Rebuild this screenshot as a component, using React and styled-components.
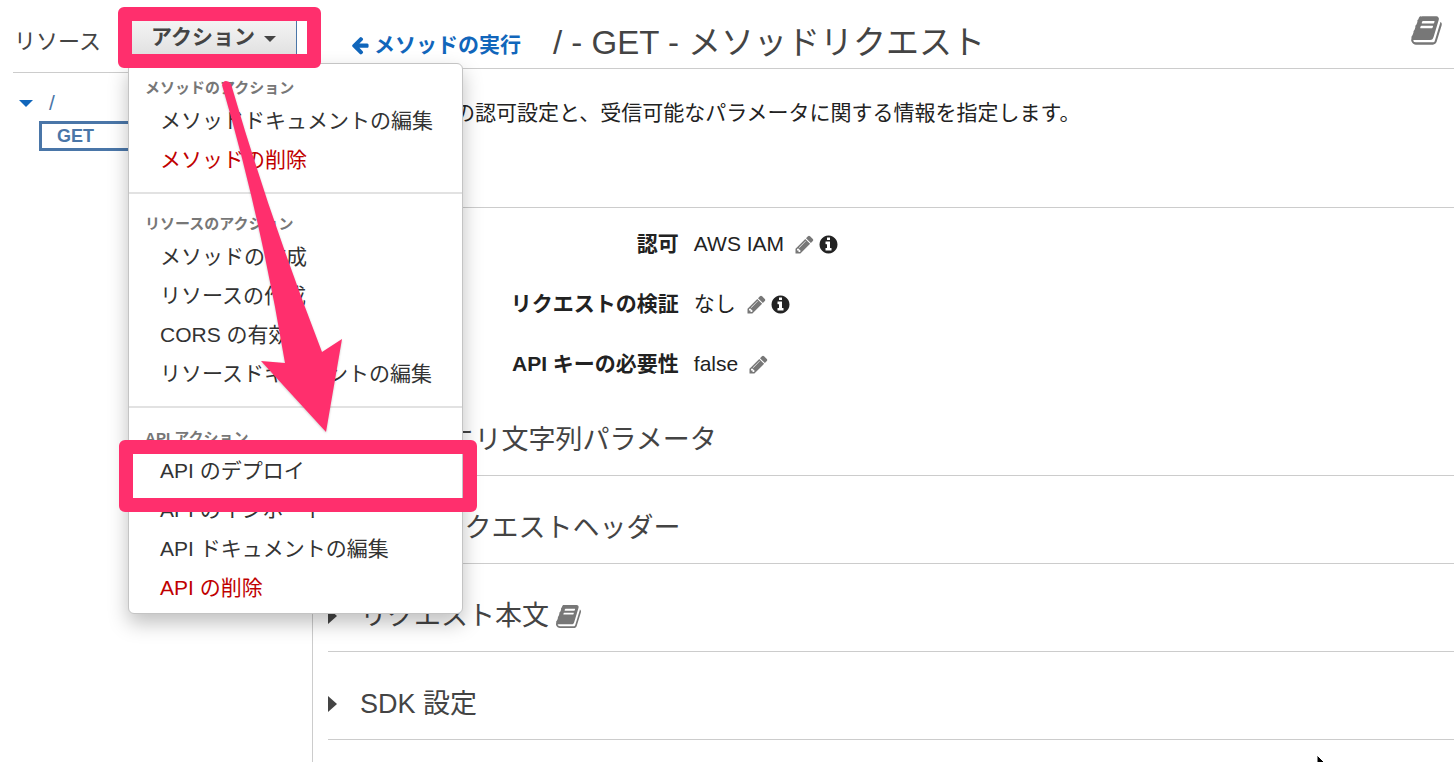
import React from "react";
import styled, { createGlobalStyle } from "styled-components";

const ICONS = {
  pencil:
    "M491 1536l91-91-235-235-91 91v107h128v128h107zm523-928q0-22-22-22-10 0-17 7l-542 542q-7 7-7 17 0 22 22 22 10 0 17-7l542-542q7-7 7-17zm-54-192l416 416-832 832h-416v-416zm683 96q0 53-37 90l-166 166-416-416 166-165q36-38 90-38 53 0 91 38l235 234q37 39 37 91z",
  book: "M1703 478q40 57 18 129l-275 906q-19 64-76.5 107.5t-122.5 43.5h-923q-77 0-148.5-53.5t-99.5-131.5q-24-67-2-127 0-4 3-27t4-37q1-8-3-21.5t-3-19.5q2-11 8-21t16.5-23.5 16.5-23.5q23-38 45-91.5t30-91.5q3-10 .5-30t-.5-28q3-11 17-28t17-23q21-36 42-92t25-90q1-9-2.5-32t.5-28q4-13 22-30.5t22-22.5q19-26 42.5-84.5t27.5-96.5q1-8-3-25.5t-2-26.5q2-8 9-18t18-23 17-21q8-12 16.5-30.5t15-35 16-36 19.5-32 26.5-23.5 36-11.5 47.5 5.5l-1 3q38-9 51-9h761q74 0 114 56t18 130l-274 906q-36 119-71.5 153.5t-128.5 34.5h-869q-27 0-38 15-11 16-1 43 24 70 144 70h923q29 0 56-15.5t35-41.5l300-987q7-22 5-57 38 15 59 43zm-1064 2q-4 13 2 22.5t20 9.5h608q13 0 25.5-9.5t16.5-22.5l21-64q4-13-2-22.5t-20-9.5h-608q-13 0-25.5 9.5t-16.5 22.5zm-83 256q-4 13 2 22.5t20 9.5h608q13 0 25.5-9.5t16.5-22.5l21-64q4-13-2-22.5t-20-9.5h-608q-13 0-25.5 9.5t-16.5 22.5z",
  info: "M1152 1376v-160q0-14-9-23t-23-9h-96v-512q0-14-9-23t-23-9h-320q-14 0-23 9t-9 23v160q0 14 9 23t23 9h96v320h-96q-14 0-23 9t-9 23v160q0 14 9 23t23 9h448q14 0 23-9t9-23zm-128-896v-160q0-14-9-23t-23-9h-192q-14 0-23 9t-9 23v160q0 14 9 23t23 9h192q14 0 23-9t9-23zm640 416q0 209-103 385.5t-279.5 279.5-385.5 103-385.5-103-279.5-279.5-103-385.5 103-385.5 279.5-279.5 385.5-103 385.5 103 279.5 279.5 103 385.5z",
  arrowLeft:
    "M1664 896v128q0 53-32.5 90.5t-84.5 37.5h-704l293 294q38 36 38 90t-38 90l-75 76q-37 37-90 37-52 0-91-37l-651-652q-37-37-37-90 0-52 37-91l651-650q38-38 91-38 52 0 90 38l75 74q38 38 38 91t-38 91l-293 293h704q52 0 84.5 37.5t32.5 90.5z",
};

const Icon = ({ name, size }) => (
  <svg
    width={size}
    height={size}
    viewBox="0 0 1792 1792"
    fill="currentColor"
    aria-hidden="true"
  >
    <path d={ICONS[name]} />
  </svg>
);

const menuGroups = [
  {
    label: "メソッドのアクション",
    items: [
      { text: "メソッドドキュメントの編集" },
      { text: "メソッドの削除", danger: true },
    ],
  },
  {
    label: "リソースのアクション",
    items: [
      { text: "メソッドの作成" },
      { text: "リソースの作成" },
      { text: "CORS の有効化" },
      { text: "リソースドキュメントの編集" },
    ],
  },
  {
    label: "API アクション",
    items: [
      { text: "API のデプロイ", marked: true },
      { text: "API のインポート" },
      { text: "API ドキュメントの編集" },
      { text: "API の削除", danger: true },
    ],
  },
];

const settings = [
  { label: "認可", value: "AWS IAM", info: true },
  { label: "リクエストの検証", value: "なし", info: true },
  { label: "API キーの必要性", value: "false" },
];

const ActionsMenu = () => (
  <Menu>
    {menuGroups.map((group) => (
      <MenuGroup key={group.label}>
        <MenuLabel>{group.label}</MenuLabel>
        {group.items.map((item) => (
          <MenuRow key={item.text}>
            <MenuItem type="button" $danger={item.danger}>
              {item.text}
            </MenuItem>
            {item.marked && <ItemMark />}
          </MenuRow>
        ))}
      </MenuGroup>
    ))}
    <Pointer width="90" height="360" viewBox="0 0 90 360" aria-hidden="true">
      <path d="M1 12 Q2 8 5 8 Q8 8 10 11 Q48 142 101 279 L121 266 L105 359 L40 288 L64 290 Q40 146 1 12 Z" />
    </Pointer>
  </Menu>
);

const Section = ({ title, open, book, children }) => (
  <section>
    <SectionHeader>
      <SectionToggle type="button" aria-expanded={!!open}>
        <CaretSlot>{open ? <CaretDown /> : <CaretRight />}</CaretSlot>
        {title}
      </SectionToggle>
      {book && (
        <IconButton type="button" aria-label="ドキュメント">
          <Icon name="book" size={27} />
        </IconButton>
      )}
    </SectionHeader>
    {children}
  </section>
);

const App = () => {
  return (
    <>
      <GlobalStyle />
      <Page>
        <Sidebar>
          <SidebarHeader>
            <SidebarTitle>リソース</SidebarTitle>
            <ActionsWrap>
              <ActionsButton type="button" aria-haspopup="true">
                アクション
                <ButtonCaret />
              </ActionsButton>
              <ActionsMenu />
              <ButtonMark />
            </ActionsWrap>
          </SidebarHeader>
          <Tree>
            <TreeRoot href="#root">
              <TreeCaret />/
            </TreeRoot>
            <TreeMethod href="#get">GET</TreeMethod>
          </Tree>
        </Sidebar>

        <Main>
          <MainHeader>
            <BackLink href="#execution">
              <Icon name="arrowLeft" size={20} />
              メソッドの実行
            </BackLink>
            <Title>/ - GET - メソッドリクエスト</Title>
            <IconButton type="button" aria-label="ドキュメント">
              <Icon name="book" size={33} />
            </IconButton>
          </MainHeader>
          <Description>
            このメソッドの認可設定と、受信可能なパラメータに関する情報を指定します。
          </Description>
          <Sections>
            <Section title="設定" open>
              <SettingList>
                {settings.map((row) => (
                  <SettingRow key={row.label}>
                    <dt>{row.label}</dt>
                    <dd>
                      {row.value}
                      <SettingIcons>
                        <IconButton type="button" aria-label="編集">
                          <Icon name="pencil" size={21} />
                        </IconButton>
                        {row.info && (
                          <IconButton type="button" aria-label="情報" $dark>
                            <Icon name="info" size={21} />
                          </IconButton>
                        )}
                      </SettingIcons>
                    </dd>
                  </SettingRow>
                ))}
              </SettingList>
            </Section>
            <Section title="URL クエリ文字列パラメータ" />
            <Section title="HTTP リクエストヘッダー" />
            <Section title="リクエスト本文" book />
            <Section title="SDK 設定" />
          </Sections>
        </Main>
      </Page>
      <Cursor width="16" height="24" viewBox="0 0 16 24" aria-hidden="true">
        <path d="M2 2 V19 L6 15 L9 22 L12 21 L9 14 H14 Z" />
      </Cursor>
    </>
  );
};

export default App;

const GlobalStyle = createGlobalStyle`
  * {
    box-sizing: border-box;
  }

  body {
    margin: 0;
    background: #fff;
    color: #222;
    font-family: "Liberation Sans", "Noto Sans CJK JP", sans-serif;
    font-size: 21px;
    line-height: 24px;
    overflow: hidden;
  }

  button {
    margin: 0;
    padding: 0;
    border: 0;
    background: none;
    color: inherit;
    font: inherit;
    cursor: pointer;
  }

  a {
    text-decoration: none;
  }

  h1, h2, p, dl, dd, ul {
    margin: 0;
    padding: 0;
  }

  svg {
    display: block;
    flex: none;
  }
`;

const Page = styled.div`
  display: flex;
  min-height: 100vh;
`;

const Sidebar = styled.aside`
  flex: none;
  width: 313px;
  padding: 0 16px 0 13px;
  background: linear-gradient(#ccc, #ccc) right 0 top 16px / 1px 100% no-repeat;
`;

const SidebarHeader = styled.div`
  display: flex;
  justify-content: space-between;
  align-items: flex-start;
  padding-top: 12px;
  border-bottom: 1px solid #ccc;
`;

const SidebarTitle = styled.h2`
  padding-left: 1px;
  font-size: 22px;
  line-height: 60px;
  font-weight: 400;
  color: #444;
`;

const ActionsWrap = styled.div`
  position: relative;
`;

const ActionsButton = styled.button`
  display: flex;
  align-items: center;
  gap: 9px;
  height: 50px;
  padding: 0 20px 0 22px;
  border: 1px solid #4a76a8;
  border-radius: 3px;
  background: linear-gradient(#f8f8f8, #dedede);
  color: #444;
  font-weight: 700;
`;

const ButtonCaret = styled.span`
  margin-top: 4px;
  border: 6px solid transparent;
  border-top-color: #444;
  border-bottom: 0;
`;

const Mark = styled.div`
  position: absolute;
  border: 14px solid #ff2f6d;
  border-radius: 6px;
  pointer-events: none;
`;

const ButtonMark = styled(Mark)`
  inset: -5px -24px -6px -10px;
  z-index: 2;
`;

const ItemMark = styled(Mark)`
  inset: -11px -15px -22px -10px;
  z-index: 1;
`;

const Menu = styled.div`
  position: absolute;
  top: 51px;
  left: 0;
  z-index: 1;
  width: 335px;
  padding: 10px 0 6px;
  border: 1px solid #c4c4c4;
  border-radius: 6px;
  background: #fff;
  box-shadow: 0 9px 20px rgba(0, 0, 0, 0.25);
`;

const MenuGroup = styled.div`
  & + & {
    margin-top: 13px;
    padding-top: 16px;
    border-top: 2px solid #e2e2e2;
  }
`;

const MenuLabel = styled.div`
  padding-left: 16px;
  font-size: 15px;
  line-height: 27px;
  font-weight: 700;
  color: #777;
`;

const MenuRow = styled.div`
  position: relative;
`;

const MenuItem = styled.button`
  display: block;
  width: 100%;
  padding-left: 31px;
  line-height: 39px;
  text-align: left;
  white-space: nowrap;
  color: ${(props) => (props.$danger ? "#c00000" : "#333")};

  &:hover {
    background: #f5f5f5;
  }
`;

const Pointer = styled.svg`
  position: absolute;
  top: 9px;
  left: 92px;
  overflow: visible;
  fill: #ff2f6d;
  filter: drop-shadow(0 1px 1px rgba(0, 0, 0, 0.2));
  pointer-events: none;
`;

const Tree = styled.nav`
  display: flex;
  flex-direction: column;
  gap: 4px;
  padding: 16px 0 0 6px;
`;

const TreeRoot = styled.a`
  display: flex;
  align-items: center;
  gap: 16px;
  line-height: 28px;
  color: #4a76a8;
`;

const TreeCaret = styled.span`
  border: 7px solid transparent;
  border-top-color: #1166bb;
  border-bottom: 0;
`;

const TreeMethod = styled.a`
  margin-left: 20px;
  padding-left: 15px;
  border: 3px solid #4a76a8;
  font-size: 18px;
  line-height: 24px;
  font-weight: 700;
  color: #4a76a8;
`;

const Main = styled.main`
  flex: 1;
  min-width: 0;
  padding-left: 15px;
`;

const MainHeader = styled.header`
  display: flex;
  align-items: center;
  padding: 18px 11px 0 22px;
  border-bottom: 1px solid #ccc;

  > button {
    align-self: flex-start;
    margin: -4px 0 0 auto;
  }
`;

const BackLink = styled.a`
  display: flex;
  align-items: center;
  gap: 4px;
  margin-right: 32px;
  padding-top: 4px;
  font-weight: 700;
  white-space: nowrap;
  color: #1166bb;
`;

const Title = styled.h1`
  font-size: 33px;
  line-height: 50px;
  font-weight: 400;
  color: #444;
`;

const Description = styled.p`
  padding: 32px 0 4px;
`;

const Sections = styled.div`
  display: flex;
  flex-direction: column;
  gap: 9px;
`;

const SectionHeader = styled.h2`
  display: flex;
  align-items: center;
  gap: 6px;
  padding: 23px 0 15px;
  border-bottom: 1px solid #ccc;
  font-size: 27px;
  line-height: 40px;
  font-weight: 400;
  color: #444;
`;

const SectionToggle = styled.button`
  display: flex;
  align-items: center;
`;

const CaretSlot = styled.span`
  width: 32px;
`;

const CaretRight = styled.span`
  display: block;
  width: 0;
  border: 8px solid transparent;
  border-left: 9px solid #444;
  border-right: 0;
`;

const CaretDown = styled.span`
  display: block;
  width: 0;
  border: 8px solid transparent;
  border-top: 9px solid #444;
  border-bottom: 0;
`;

const SettingList = styled.dl`
  display: flex;
  flex-direction: column;
  gap: 12px;
  padding-top: 12px;
`;

const SettingRow = styled.div`
  display: grid;
  grid-template-columns: 6fr 13fr;
  gap: 15px;
  line-height: 48px;

  dt {
    text-align: right;
    font-weight: 700;
  }

  dd {
    display: flex;
    align-items: center;
    gap: 10px;
  }
`;

const SettingIcons = styled.span`
  display: flex;
  gap: 3px;
`;

const IconButton = styled.button`
  color: ${(props) => (props.$dark ? "#222" : "#777")};
`;

const Cursor = styled.svg`
  position: fixed;
  right: 123px;
  bottom: -15px;
  fill: #000;
  stroke: #fff;
  stroke-width: 1;
  pointer-events: none;
`;
